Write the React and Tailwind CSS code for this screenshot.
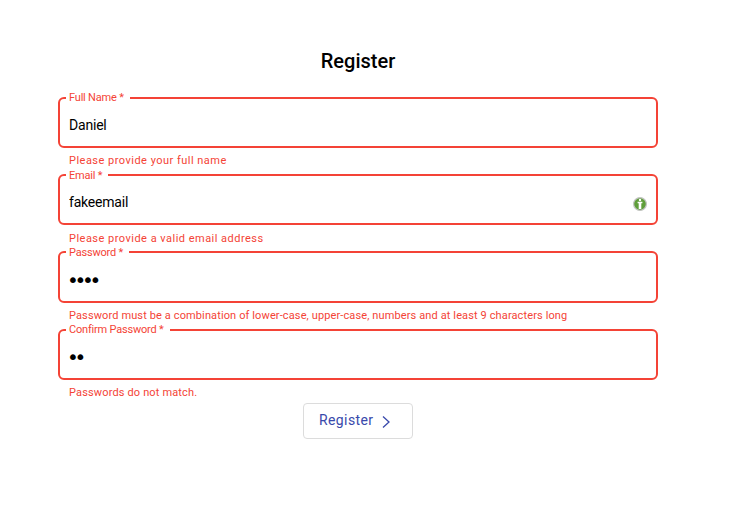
import React from 'react';

const fields = [
  { label: 'Full Name', value: 'Daniel', type: 'text', error: 'Please provide your full name', errorClass: 'tracking-[0.48px]' },
  { label: 'Email', value: 'fakeemail', type: 'text', error: 'Please provide a valid email address', errorClass: 'tracking-[0.48px]', badge: true },
  { label: 'Password', value: '1234', type: 'password', error: 'Password must be a combination of lower-case, upper-case, numbers and at least 9 characters long', errorClass: 'tracking-[0.12px]' },
  { label: 'Confirm Password', value: '12', type: 'password', error: 'Passwords do not match.', errorClass: 'tracking-[0.15px]' },
];

const ManagerBadge = () => (
  <svg width="14" height="14" viewBox="0 0 14 14" className="absolute right-[9px] top-[21px]">
    <circle cx="7" cy="7" r="6.4" fill="#5f9e3a" stroke="#c4c4c4" strokeWidth="1.2" />
    <path d="M4.6 4.8h4.8v1.4H8.3v5.8H5.7V6.2H4.6z" fill="#fff" />
    <circle cx="7" cy="3" r="1.2" fill="#fff" />
  </svg>
);

const App = () => {
  return (
    <div className="min-h-[520px] bg-white font-['Roboto',sans-serif] pt-[48px] px-[58px]">
      <h1 className="text-[20px] leading-[26px] font-medium text-center text-black mb-[22.8px] w-[600px]">Register</h1>

      <form className="w-[600px]">
        {fields.map((field) => (
          <div key={field.label} className="h-[77.33px]">
            <div className="relative h-[51.3px] border-2 border-[#f44336] rounded-[6px]">
              <label className="absolute -top-[6.5px] left-[6px] bg-white px-[3px] pr-[6px] text-[11px] leading-[12px] tracking-[-0.2px] text-[#f44336]">
                {field.label} *
              </label>
              <input
                readOnly
                type={field.type}
                value={field.value}
                className={
                  field.type === 'password'
                    ? "w-full h-full pl-[7px] pt-[5px] text-[20px] tracking-[-4.3px] font-['DejaVu_Sans',sans-serif] text-black bg-transparent outline-none"
                    : 'w-full h-full pl-[9px] pt-[5px] text-[14px] tracking-[-0.2px] text-black bg-transparent outline-none'
                }
              />
              {field.badge && <ManagerBadge />}
            </div>
            <p className={`pl-[11px] mt-[6.1px] text-[11px] leading-[14px] text-[#f44336] ${field.errorClass}`}>{field.error}</p>
          </div>
        ))}

        <div className="flex justify-center">
          <button
            type="button"
            className="mt-[-3px] w-[110px] h-[36px] flex items-center pl-[15px] pb-[2px] gap-[8px] bg-white border border-[#dcdcdc] rounded-[4px] text-[14px] tracking-[0.4px] text-[#3949ab]"
          >
            Register
            <svg width="8" height="12" viewBox="0 0 8 12" fill="none" stroke="#3949ab" strokeWidth="1.3" className="mt-[4px]">
              <path d="M1 .5 7 6 1 11.5" />
            </svg>
          </button>
        </div>
      </form>
    </div>
  );
};

export default App;
